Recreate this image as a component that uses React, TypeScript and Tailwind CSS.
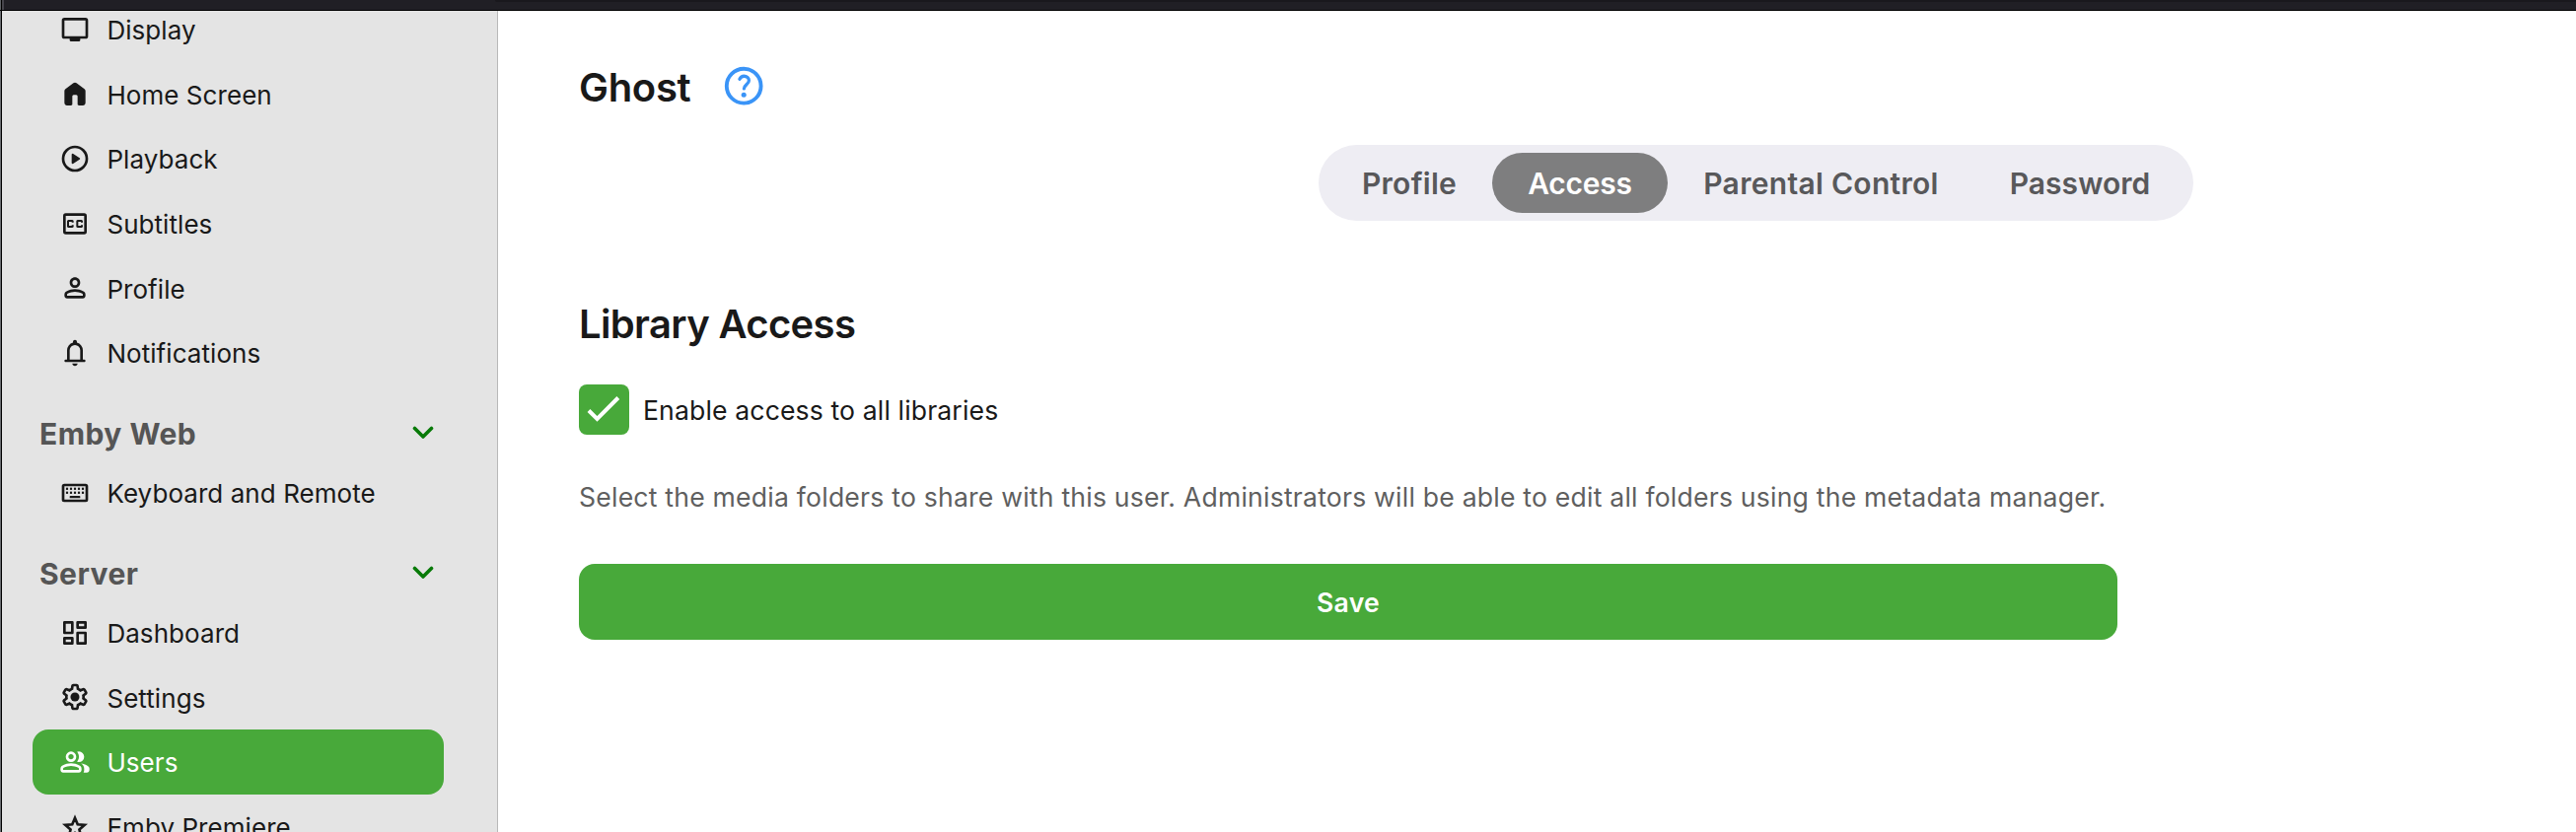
import React from 'react';

interface NavItem {
  label: string;
  icon: React.ReactNode;
  active?: boolean;
}

const USER_ITEMS: NavItem[] = [
  {
    label: 'Display',
    icon: (
      <>
        <rect x="3" y="4" width="18" height="14" rx="1" fill="none" stroke="currentColor" strokeWidth="2" />
        <path d="M8 18h8v2q0 1-1 1H9q-1 0-1-1z" />
      </>
    ),
  },
  {
    label: 'Home Screen',
    icon: <path d="M4 19v-9q0-.475.213-.9t.587-.7l6-4.5q.525-.4 1.200-.4t1.200.4l6 4.500q.375.275.588.7T20 10v9q0 .825-.588 1.413T18 21h-3q-.425 0-.712-.288T14 20v-6q0-.425-.288-.712T13 13h-2q-.425 0-.712.288T10 14v6q0 .425-.288.713T9 21H6q-.825 0-1.412-.587T4 19" />,
  },
  {
    label: 'Playback',
    icon: (
      <>
        <circle cx="12" cy="12" r="9" fill="none" stroke="currentColor" strokeWidth="2" />
        <path d="m10.650 15.750 4.875-3.125q.35-.225.35-.625t-.35-.625L10.650 8.250q-.375-.25-.763-.038t-.387.663v6.250q0 .45.388.663t.762-.038" />
      </>
    ),
  },
  {
    label: 'Subtitles',
    icon: (
      <>
        <rect x="4" y="5" width="16" height="14" rx="1" fill="none" stroke="currentColor" strokeWidth="2" />
        <path d="M7 15h3q.425 0 .713-.288T11 14v-1H9.500v.5h-2v-3h2v.5H11v-1q0-.425-.288-.712T10 9H7q-.425 0-.712.288T6 10v4q0 .425.288.713T7 15" />
        <path d="M14 15h3q.425 0 .713-.288T18 14v-1h-1.500v.5h-2v-3h2v.5H18v-1q0-.425-.288-.712T17 9h-3q-.425 0-.712.288T13 10v4q0 .425.288.713T14 15" />
      </>
    ),
  },
  {
    label: 'Profile',
    icon: <path d="M12 6c1.100 0 2 .9 2 2s-.9 2-2 2-2-.9-2-2 .9-2 2-2m0-2C9.790 4 8 5.790 8 8s1.790 4 4 4 4-1.790 4-4-1.790-4-4-4zM4 17.200q0-.85.438-1.562T5.600 14.550q1.550-.775 3.150-1.162T12 13t3.250.388 3.150 1.162q.725.375 1.163 1.088T20 17.200V18q0 .825-.587 1.413T18 20H6q-.825 0-1.412-.587T4 18zM6 18h12v-.8q0-.275-.137-.5t-.363-.35q-1.350-.675-2.725-1.012T12 15t-2.775.338T6.500 16.350q-.225.125-.362.35T6 17.200z" />,
  },
  {
    label: 'Notifications',
    icon: <path d="M5 19q-.425 0-.712-.288T4 18t.288-.712T5 17h1v-7q0-2.075 1.250-3.688T10.500 4.200v-.7q0-.625.438-1.062T12 2t1.063.438T13.500 3.500v.7q2 .5 3.250 2.113T18 10v7h1q.425 0 .713.288T20 18t-.288.713T19 19zm7 3q-.825 0-1.412-.587T10 20h4q0 .825-.587 1.413T12 22m-4-5h8v-7q0-1.650-1.175-2.825T12 6 9.175 7.175 8 10z" />,
  },
];

const WEB_ITEMS: NavItem[] = [
  {
    label: 'Keyboard and Remote',
    icon: (
      <>
        <rect x="3" y="6" width="18" height="12" rx="1" fill="none" stroke="currentColor" strokeWidth="2" />
        {[8, 11].map((y) =>
          [5.2, 8.2, 11.2, 14.2, 17.2].map((x) => <rect key={`${x}-${y}`} x={x} y={y} width="1.6" height="1.7" />)
        )}
        <rect x="8" y="14.300" width="8" height="1.700" rx="0.500" />
      </>
    ),
  },
];

const SERVER_ITEMS: NavItem[] = [
  {
    label: 'Dashboard',
    icon: (
      <g fill="none" stroke="currentColor" strokeWidth="2" strokeLinejoin="round">
        <rect x="4" y="4" width="6" height="8" />
        <rect x="4" y="16" width="6" height="4" />
        <rect x="14" y="4" width="6" height="4" />
        <rect x="14" y="12" width="6" height="8" />
      </g>
    ),
  },
  {
    label: 'Settings',
    icon: (
      <>
        <path d="M10.825 22q-.675 0-1.162-.45t-.588-1.100L8.850 18.800q-.325-.125-.612-.3t-.563-.375l-1.550.65q-.625.275-1.250.05t-.975-.8l-1.175-2.050q-.35-.575-.2-1.225t.675-1.075l1.325-1Q4.500 12.500 4.500 12.337v-.675q0-.162.025-.337l-1.325-1Q2.675 9.900 2.525 9.250t.2-1.225L3.900 5.975q.35-.575.975-.8t1.250.05l1.550.65q.275-.2.575-.375t.6-.3l.225-1.650q.1-.65.588-1.100T10.825 2h2.350q.675 0 1.163.45t.587 1.100l.225 1.650q.325.125.613.3t.562.375l1.550-.65q.625-.275 1.250-.05t.975.8l1.175 2.050q.35.575.2 1.225t-.675 1.075l-1.325 1q.025.175.025.338v.674q0 .163-.05.338l1.325 1q.525.425.675 1.075t-.2 1.225l-1.200 2.050q-.35.575-.975.8t-1.250-.05l-1.500-.65q-.275.2-.575.375t-.6.3l-.225 1.650q-.1.65-.587 1.100t-1.163.45zM11 20h1.975l.35-2.650q.775-.2 1.438-.587t1.212-.938l2.475 1.025.975-1.700-2.150-1.625q.125-.35.175-.737T17.500 12t-.05-.787-.175-.738l2.150-1.625-.975-1.700-2.475 1.050q-.55-.575-1.212-.962t-1.438-.588L13 4h-1.975l-.35 2.650q-.775.2-1.437.588t-1.213.937L5.550 7.150l-.975 1.700 2.150 1.600q-.125.375-.175.75t-.05.8q0 .4.05.775t.175.75l-2.150 1.625.975 1.700 2.475-1.050q.55.575 1.213.963t1.437.587z" />
        <circle cx="12" cy="12" r="3.400" />
      </>
    ),
  },
  {
    label: 'Users',
    active: true,
    icon: <path d="M1 17.200q0-.85.438-1.562T2.600 14.550q1.550-.775 3.150-1.162T9 13t3.250.388 3.150 1.162q.725.375 1.163 1.088T17 17.200V18q0 .825-.587 1.413T15 20H3q-.825 0-1.412-.587T1 18zM21 20h-2.550q.275-.45.413-.962T19 18v-1q0-1.100-.612-2.113T16.650 13.150q1.275.15 2.400.513t2.100.887q.9.5 1.375 1.112T23 17v1q0 .825-.587 1.413T21 20M9 12q-1.650 0-2.825-1.175T5 8t1.175-2.825T9 4t2.825 1.175T13 8t-1.175 2.825T9 12m10-4q0 1.650-1.175 2.825T15 12q-.275 0-.7-.062t-.7-.138q.675-.8 1.038-1.775T15 8t-.362-2.025T13.600 4.200q.35-.125.7-.162T15 4q1.650 0 2.825 1.175T19 8M3 18h12v-.8q0-.275-.137-.5t-.363-.35q-1.350-.675-2.725-1.012T9 15t-2.775.338T3.500 16.350q-.225.125-.362.35T3 17.200zm6-8q.825 0 1.413-.587T11 8t-.587-1.412T9 6t-1.412.588T7 8t.588 1.413T9 10" />,
  },
  {
    label: 'Emby Premiere',
    icon: <path d="M12 5l2.050 4.950 5.300.45-4 3.500 1.200 5.200L12 16.350 7.450 19.100l1.200-5.200-4-3.500 5.300-.45z" fill="none" stroke="currentColor" strokeWidth="2" />,
  },
];

const TABS = [
  { label: 'Profile', className: 'w-[168px] tracking-[0.3px]' },
  { label: 'Access', className: 'w-[178px] tracking-[-0.25px] bg-[#7e7e7f] text-white' },
  { label: 'Parental Control', className: 'w-[311px] tracking-[0.3px]' },
  { label: 'Password', className: 'w-[214px] tracking-[0.05px]' },
];

const NavRow: React.FC<{ item: NavItem }> = ({ item }) => (
  <a
    className={`flex items-center gap-4 h-[65.6px] pl-[27.4px] rounded-2xl shrink-0 ${
      item.active ? 'bg-[#48a93a] text-white' : 'text-[#191919]'
    }`}
  >
    <svg viewBox="0 0 24 24" className="size-8 shrink-0" fill="currentColor" fillRule="evenodd">
      {item.icon}
    </svg>
    <span className="pt-0.5 text-[26px] tracking-[0.06px] whitespace-nowrap">{item.label}</span>
  </a>
);

const SectionHeader: React.FC<{ title: string }> = ({ title }) => (
  <div className="flex items-center justify-between h-[76.400px] shrink-0 pt-[23.4px] pl-[7px] pr-2.5">
    <h2 className="text-[30px] font-bold tracking-[0.45px] text-[#555555]">{title}</h2>
    <svg viewBox="0 0 22 14" className="w-[22px] h-[14px] -mt-[3px]" fill="none" stroke="#087a08" strokeWidth="3.600" strokeLinecap="round" strokeLinejoin="round">
      <path d="M2.500 2.500l8.500 8.500 8.500-8.500" />
    </svg>
  </div>
);

export default function App() {
  return (
    <div className="w-[2612px] h-[844px] flex flex-col overflow-hidden bg-white font-['Inter',sans-serif] text-[#191919]">
      {/* WINDOW CHROME */}
      <div className="h-[11px] shrink-0 flex border-b border-black bg-[#201f25]">
        <div className="w-px bg-[#5f6266]" />
        <div className="w-px bg-black" />
        <div className="w-0.5 bg-[#45444b]" />
        <div className="h-0.5 flex-1 ml-[498px] rounded-bl bg-[#19181d]" />
      </div>

      <div className="flex flex-1 min-h-0">
        <div className="w-0.5 shrink-0 bg-[#6b6e72] border-r border-black" />

        {/* SIDEBAR */}
        <aside className="w-[503px] shrink-0 overflow-hidden bg-[#e4e4e4] border-r border-[#b9b9b9]">
          <nav className="flex flex-col -mt-[14px] ml-[31px] w-[417px]">
            {USER_ITEMS.map((item) => <NavRow key={item.label} item={item} />)}
            <SectionHeader title="Emby Web" />
            {WEB_ITEMS.map((item) => <NavRow key={item.label} item={item} />)}
            <SectionHeader title="Server" />
            {SERVER_ITEMS.map((item) => <NavRow key={item.label} item={item} />)}
          </nav>
        </aside>

        {/* CONTENT */}
        <main className="flex-1 flex flex-col items-start pl-[82px] pt-[46px]">
          <div className="flex items-center h-[62px]">
            <h1 className="w-[144px] pt-0.5 text-[40px] font-semibold tracking-[-0.3px]">Ghost</h1>
            <svg viewBox="0 0 24 24" className="size-[46.400px] mb-0.5" fill="none" stroke="#3a94f7" strokeWidth="2" strokeLinecap="round">
              <circle cx="12" cy="12" r="9" />
              <path d="M9.800 8.400Q10.600 6.850 12.100 6.850C13.600 6.850 14.700 7.800 14.700 9.150C14.700 11 12.100 11.500 12.100 13.400" strokeWidth="1.700" />
              <circle cx="12" cy="16.700" r="1.300" fill="#3a94f7" stroke="none" />
            </svg>
          </div>

          <div className="flex items-center h-[77px] mt-7 ml-[750px] p-2 rounded-full bg-[#eeedf3] text-[#58585a]">
            {TABS.map((tab) => (
              <button key={tab.label} className={`h-[61px] pt-0.5 rounded-full text-[30px] font-semibold whitespace-nowrap ${tab.className}`}>
                {tab.label}
              </button>
            ))}
          </div>

          <h2 className="mt-[74px] h-[62px] leading-[62px] text-[40px] font-semibold tracking-[-0.65px]">Library Access</h2>

          <label className="flex items-center gap-3.5 mt-[30px]">
            <span className="size-[51px] rounded-lg bg-[#48a93a]">
              <svg viewBox="0 0 51 51" fill="none" stroke="white" strokeWidth="4">
                <path d="M10 26.500l8.500 8.500L39.800 13.500" />
              </svg>
            </span>
            <span className="pt-0.5 text-[26.600px] tracking-[0.13px]">Enable access to all libraries</span>
          </label>

          <p className="mt-[43px] leading-10 text-[26.600px] tracking-[0.21px] whitespace-nowrap text-[#5f5f5f]">
            Select the media folders to share with this user. Administrators will be able to edit all folders using the metadata manager.
          </p>

          <button className="mt-12 w-[1560px] h-[77px] pt-0.5 rounded-2xl bg-[#48a93a] text-white text-[26.600px] font-semibold tracking-[0.2px]">
            Save
          </button>
        </main>
      </div>
    </div>
  );
}
